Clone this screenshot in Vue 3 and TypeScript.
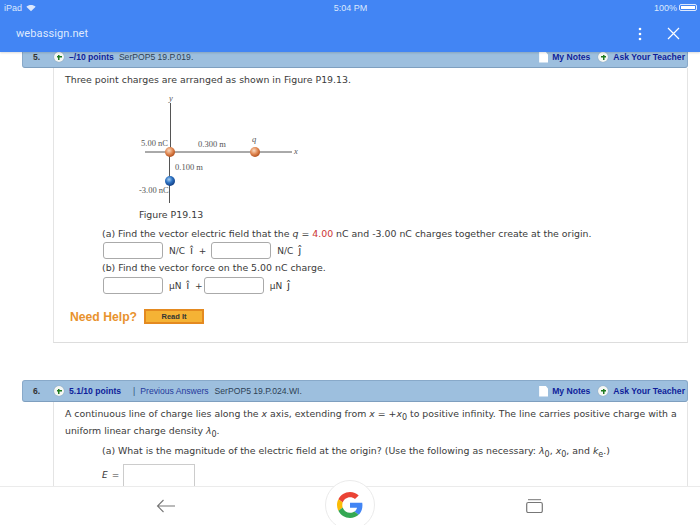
<script setup lang="ts">
interface AnswerRow {
  unit: string
  tight: boolean
}

const rowA: AnswerRow = { unit: 'N/C', tight: false }
const rowB: AnswerRow = { unit: 'μN', tight: true }
</script>

<template>
  <div class="screen">
    <header class="topbar">
      <div class="status">
        <span class="status-left">
          iPad
          <svg class="wifi" width="10" height="8" viewBox="0 0 11 8">
            <path d="M5.5 7.6 L0.4 2.6 C3.2 0 7.8 0 10.6 2.6 Z" fill="#dce8fd" />
          </svg>
        </span>
        <span class="status-time">5:04 PM</span>
        <span class="status-right">
          100%
          <span class="battery"><span class="battery-fill"></span></span>
        </span>
      </div>
      <div class="urlbar">
        <span class="url">webassign.net</span>
        <span class="url-actions">
          <svg width="4" height="14" viewBox="0 0 4 14">
            <circle cx="2" cy="2" r="1.3" fill="#fff" />
            <circle cx="2" cy="7" r="1.3" fill="#fff" />
            <circle cx="2" cy="12" r="1.3" fill="#fff" />
          </svg>
          <svg width="13" height="13" viewBox="0 0 13 13">
            <path d="M1 1 L12 12 M12 1 L1 12" stroke="#fff" stroke-width="1.2" fill="none" />
          </svg>
        </span>
      </div>
    </header>

    <main class="page">
      <section class="question q5">
        <div class="qhead qhead-cut">
          <span class="qnum">5.</span>
          <span class="plus"></span>
          <span class="points">–/10 points</span>
          <span class="ref">SerPOP5 19.P.019.</span>
          <span class="tools">
            <span class="note"></span><span class="link">My Notes</span>
            <span class="plus plus-tool"></span><span class="link">Ask Your Teacher</span>
          </span>
        </div>
        <div class="qbody">
          <p class="intro">Three point charges are arranged as shown in Figure P19.13.</p>
          <svg class="figure" width="200" height="120" viewBox="0 0 200 120">
            <defs>
              <radialGradient id="orange" cx="40%" cy="35%" r="65%">
                <stop offset="0" stop-color="#f8dcc4" />
                <stop offset="0.55" stop-color="#e28a55" />
                <stop offset="1" stop-color="#b4521f" />
              </radialGradient>
              <radialGradient id="blue" cx="40%" cy="35%" r="65%">
                <stop offset="0" stop-color="#a9d0f2" />
                <stop offset="0.5" stop-color="#2f74c4" />
                <stop offset="1" stop-color="#123f85" />
              </radialGradient>
            </defs>
            <path d="M50.5 15 V64 M49.5 64 V115 M25 64 H172" stroke="#555" stroke-width="1" fill="none" />
            <circle cx="50" cy="64" r="5" fill="url(#orange)" />
            <circle cx="135" cy="64" r="5" fill="url(#orange)" />
            <circle cx="50" cy="93" r="5" fill="url(#blue)" />
            <text x="49" y="13" class="fig-i">y</text>
            <text x="174" y="66" class="fig-i">x</text>
            <text x="132" y="54" class="fig-i">q</text>
            <text x="21" y="58" class="fig-t">5.00 nC</text>
            <text x="78" y="59" class="fig-t">0.300 m</text>
            <text x="55" y="82" class="fig-t">0.100 m</text>
            <text x="19" y="105" class="fig-t">-3.00 nC</text>
          </svg>
          <div class="sub">
            <p class="caption">Figure P19.13</p>
            <p class="line-a">(a) Find the vector electric field that the <i>q</i> = <span class="red">4.00</span> nC and -3.00 nC charges together create at the origin.</p>
            <div class="answers">
              <span class="input"></span>
              <span class="unit">{{ rowA.unit }} <span class="hat">î</span> &nbsp;+</span>
              <span class="input"></span>
              <span class="unit">{{ rowA.unit }} <span class="hat">ĵ</span></span>
            </div>
            <p class="line-b">(b) Find the vector force on the 5.00 nC charge.</p>
            <div class="answers" :class="{ tight: rowB.tight }">
              <span class="input"></span>
              <span class="unit">{{ rowB.unit }} <span class="hat">î</span> &nbsp;+</span>
              <span class="input"></span>
              <span class="unit">{{ rowB.unit }} <span class="hat">ĵ</span></span>
            </div>
          </div>
          <div class="help">
            <span class="need">Need Help?</span>
            <span class="readit">Read It</span>
          </div>
        </div>
      </section>

      <section class="question q6">
        <div class="qhead">
          <span class="qnum">6.</span>
          <span class="plus"></span>
          <span class="points">5.1/10 points</span>
          <span class="sep">|</span>
          <span class="prev">Previous Answers</span>
          <span class="ref">SerPOP5 19.P.024.WI.</span>
          <span class="tools">
            <span class="note"></span><span class="link">My Notes</span>
            <span class="plus plus-tool"></span><span class="link">Ask Your Teacher</span>
          </span>
        </div>
        <div class="qbody">
          <p class="para">A continuous line of charge lies along the <i>x</i> axis, extending from <i>x</i> = +<i>x</i><sub>0</sub> to positive infinity. The line carries positive charge with a uniform linear charge density <i>λ</i><sub>0</sub>.</p>
          <p class="part">(a) What is the magnitude of the electric field at the origin? (Use the following as necessary: <i>λ</i><sub>0</sub>, <i>x</i><sub>0</sub>, and <i>k</i><sub>e</sub>.)</p>
          <div class="eq">
            <i>E</i> =
            <span class="input-square"></span>
          </div>
        </div>
      </section>
    </main>

    <footer class="bottombar">
      <svg width="20" height="14" viewBox="0 0 20 14">
        <path d="M19 7 H1.500 M7.500 1 L1.500 7 L7.500 13" stroke="#777" stroke-width="1.100" fill="none" />
      </svg>
      <span class="gspacer"></span>
      <svg width="17" height="14" viewBox="0 0 17 14">
        <path d="M2 0.700 H15" stroke="#777" stroke-width="1" fill="none" />
        <rect x="0.700" y="3.500" width="15.600" height="10" rx="1.500" stroke="#777" stroke-width="1.200" fill="none" />
      </svg>
    </footer>
    <div class="gcircle">
      <svg width="26" height="26" viewBox="0 0 48 48">
        <path fill="#EA4335" d="M24 9.500c3.540 0 6.710 1.220 9.210 3.600l6.850-6.850C35.900 2.380 30.470 0 24 0 14.620 0 6.510 5.380 2.560 13.220l7.980 6.190C12.430 13.720 17.740 9.500 24 9.500z" />
        <path fill="#4285F4" d="M46.980 24.550c0-1.570-.15-3.090-.38-4.550H24v9.020h12.940c-.58 2.960-2.260 5.480-4.780 7.180l7.730 6c4.510-4.180 7.090-10.360 7.090-17.650z" />
        <path fill="#FBBC05" d="M10.530 28.590c-.48-1.450-.76-2.990-.76-4.590s.27-3.140.76-4.590l-7.980-6.190C.92 16.460 0 20.120 0 24c0 3.880.92 7.540 2.560 10.780l7.970-6.190z" />
        <path fill="#34A853" d="M24 48c6.480 0 11.930-2.130 15.890-5.810l-7.730-6c-2.150 1.450-4.920 2.300-8.160 2.300-6.260 0-11.570-4.220-13.470-9.910l-7.980 6.190C6.510 42.620 14.620 48 24 48z" />
      </svg>
    </div>
  </div>
</template>

<style scoped>
.screen{position:relative;width:700px;height:525px;overflow:hidden;display:flex;flex-direction:column;background:#fff;font-family:"DejaVu Sans",sans-serif;color:#3a3a3a}
.topbar{height:52px;flex:none;background:#4285f4;color:#fff;box-shadow:0 1px 2px rgba(0,0,0,0.15);z-index:2;font-family:Roboto,sans-serif}
.status{display:grid;grid-template-columns:1fr auto 1fr;align-items:center;height:15px;padding:0 3px 0 4px;font-size:9px;color:#dce8fd;font-family:"Liberation Sans",sans-serif}
.status-left{display:flex;align-items:center;gap:4px}
.status-right{display:flex;align-items:center;justify-content:flex-end;gap:2px}
.battery{display:inline-block;width:18px;height:7px;border:1px solid #dce8fd;border-radius:2px;padding:1px;box-sizing:border-box;overflow:hidden}
.battery-fill{display:block;height:100%;background:#fff}
.urlbar{display:flex;justify-content:space-between;align-items:center;height:37px;padding:0 4px 4px 16px}
.url{font-size:11px;color:#dfe9fd;letter-spacing:0.1px}
.url-actions{display:flex;align-items:center;gap:25px;padding-right:16px}
.page{flex:1;min-height:0;overflow:hidden}
.question{margin:0 12px 0 22px}
.qhead{display:flex;align-items:center;height:22px;background:#9dbfde;border:1px solid #88a9c9;border-bottom-color:#7e9fbf;border-radius:3px;box-sizing:border-box;font-family:"Liberation Sans",sans-serif;font-size:8.600px;color:#2d3f55;padding:0 2px 0 10px;width:666px}
.qhead-cut{height:16px;border-top:0;border-radius:0 0 3px 3px;padding-bottom:5px}
.qnum{width:21px;font-weight:bold;color:#333}
.plus{display:inline-block;width:10px;height:10px;border-radius:50%;background:linear-gradient(#1f7a1f,#1f7a1f) center/5px 1.500px no-repeat,linear-gradient(#1f7a1f,#1f7a1f) center/1.500px 5px no-repeat,#f4f7f4;box-shadow:0 0 1px #789;margin-right:5px}
.plus-tool{margin:0 5px 0 8px}
.points{font-weight:bold;color:#0f1e9a;margin-right:5px}
.sep{margin:0 5px 0 7px;color:#33527a}
.prev{color:#24399c;margin-right:6px}
.tools{margin-left:auto;display:flex;align-items:center}
.note{display:inline-block;width:9px;height:11px;background:#fff;margin-right:4px;clip-path:polygon(0 0,70% 0,100% 30%,100% 100%,0 100%)}
.link{font-weight:bold;color:#0f1e9a}
.qbody{margin-left:31px;border-left:1px solid #e4e4e4;border-right:1px solid #e4e4e4;box-sizing:border-box;width:635px;padding:6px 0 0 11px;font-size:9.400px}
.q5 .qbody{height:275px;border-bottom:1px solid #ddd}
.q6{margin-top:37px}
.q6 .qbody{padding-top:3px}
.intro{margin:0;line-height:12px}
.figure{display:block;margin:2px 0 0 55px}
.fig-i{font:italic 8.500px "Liberation Serif",serif;fill:#555}
.fig-t{font:8.500px "Liberation Serif",serif;fill:#555}
.sub{margin-left:37px}
.caption{margin:1px 0 0 37px;line-height:12px}
.line-a{margin:7px 0 0;line-height:12px}
.line-b{margin:3px 0 0;line-height:12px}
.answers{display:flex;align-items:center;gap:6px;margin-top:2px;height:17px;padding-left:1px}
.answers .unit:nth-of-type(2){margin-right:-1px}
.answers.tight{margin-top:3px}
.answers.tight .unit:nth-of-type(2){margin-right:-5px}
.unit{white-space:nowrap;font-size:9px}
.hat{font-size:11px;line-height:10px;margin-left:2px}
.input{display:inline-block;width:60px;height:17px;border:1px solid #aaa;border-radius:3px;box-sizing:border-box;background:#fff}
.red{color:#c33}
.help{display:flex;align-items:center;gap:7px;margin:15px 0 0 5px}
.need{font:bold 12.200px "Liberation Sans",sans-serif;color:#e8922e}
.readit{display:flex;align-items:center;justify-content:center;width:60px;height:15px;box-sizing:border-box;background:#f5b335;border:2px solid #e48a20;font:bold 7.500px "Liberation Sans",sans-serif;color:#333}
.para{margin:0;line-height:17px;font-size:9.350px}
.part{margin:5px 0 0 37px;line-height:14px;white-space:nowrap}
.eq{display:flex;align-items:flex-start;gap:4px;margin:6px 0 0 37px;line-height:22px;font-size:9px}
.input-square{display:block;width:72px;height:30px;border:1px solid #ccc;box-sizing:border-box}
sub{font-size:8px;line-height:0}
.bottombar{height:39px;flex:none;background:#fff;border-top:1px solid #ebebeb;box-sizing:border-box;display:flex;align-items:center;justify-content:space-between;padding:0 157px 0 156px;z-index:2}
.gspacer{width:50px}
.gcircle{position:absolute;left:325px;top:480px;width:50px;height:50px;border-radius:50%;background:#fff;border:1px solid #ebebeb;box-sizing:border-box;display:flex;align-items:center;justify-content:center;z-index:3}
</style>
